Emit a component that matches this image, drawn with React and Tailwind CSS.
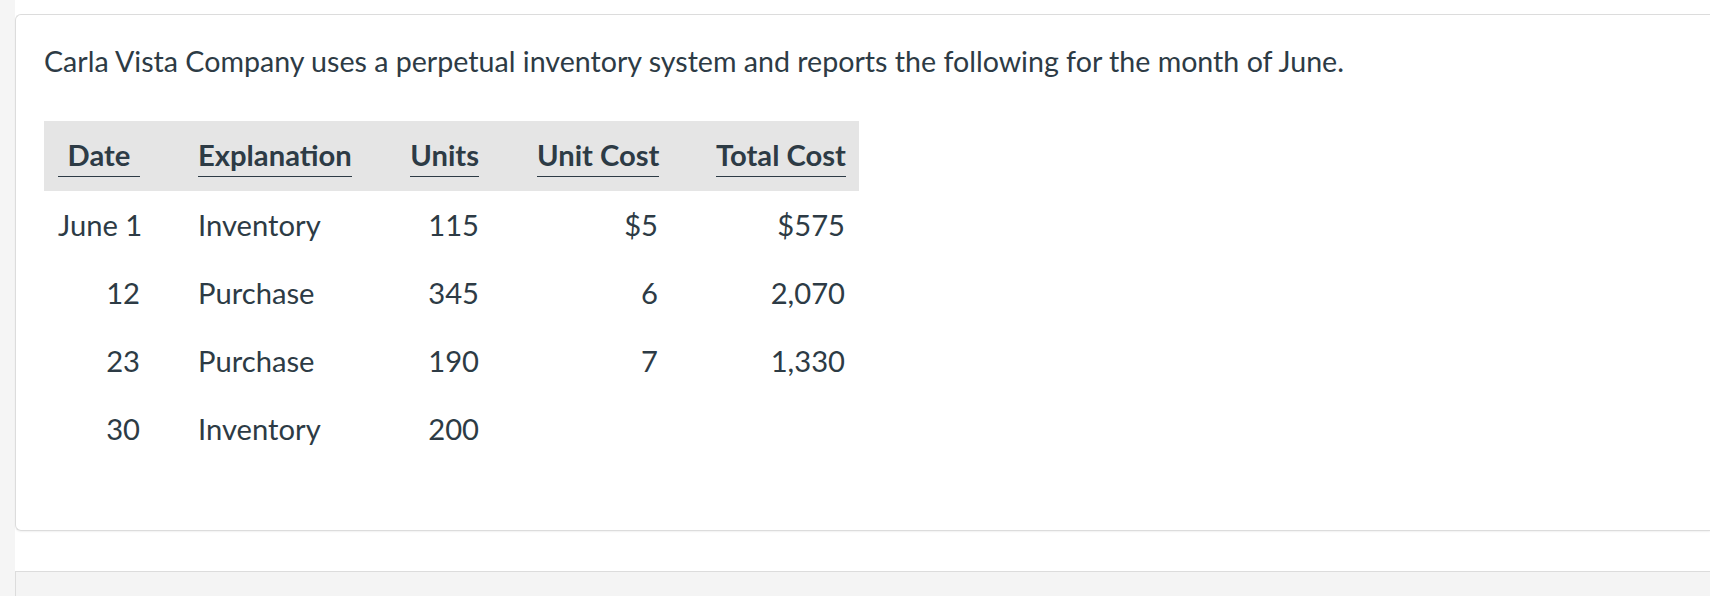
const rows = [
  { date: 'June 1', explanation: 'Inventory', units: '115', unitCost: '$5', totalCost: '$575' },
  { date: '12', explanation: 'Purchase', units: '345', unitCost: '6', totalCost: '2,070' },
  { date: '23', explanation: 'Purchase', units: '190', unitCost: '7', totalCost: '1,330' },
  { date: '30', explanation: 'Inventory', units: '200', unitCost: '', totalCost: '' },
];

function HeadCell({ children, className, full }) {
  return (
    <th className={'whitespace-nowrap pt-[12px] pb-[14px] text-center font-bold ' + className}>
      <span className={'border-b border-[#2d3b45] leading-[42px] ' + (full ? 'block w-full' : 'inline-block')}>
        {children}
      </span>
    </th>
  );
}

export default function App() {
  return (
    <div
      className="min-h-screen w-full overflow-hidden bg-[#f5f5f5] pl-[15px] text-[#2d3b45]"
      style={{ fontFamily: 'Lato, "Open Sans", Arial, sans-serif' }}
    >
      <div className="min-h-screen bg-white">
        <div className="pt-[14px]">
          {/* question card */}
          <div className="h-[517px] rounded-l-[6px] border border-r-0 border-[#dcdcdc] pl-[28px] pt-[25px] shadow-[0_1px_2px_rgba(0,0,0,0.06)]">
            <p className="text-[28.6px] leading-[42px]">
              Carla Vista Company uses a perpetual inventory system and reports the following for the month of June.
            </p>

            <table className="mt-[39px] w-[815px] table-fixed border-collapse whitespace-nowrap text-[29.2px]">
              <thead>
                <tr className="bg-[#e5e5e5]">
                  <HeadCell className="w-[125px] pl-[14px] pr-[29px]" full>Date</HeadCell>
                  <HeadCell className="w-[212px] px-[29px] text-left">Explanation</HeadCell>
                  <HeadCell className="w-[127px] px-[29px] text-right">Units</HeadCell>
                  <HeadCell className="w-[179px] px-[29px] text-right">Unit Cost</HeadCell>
                  <HeadCell className="w-[172px] pl-[29px] pr-[14px] text-right">Total Cost</HeadCell>
                </tr>
              </thead>
              <tbody>
                {rows.map((r, i) => (
                  <tr key={i} className="leading-[42px]">
                    <td className="pl-[14px] pr-[29px] pt-[13px] pb-[13px] text-right">{r.date}</td>
                    <td className="px-[29px] pt-[13px] pb-[13px] text-left">{r.explanation}</td>
                    <td className="px-[29px] pt-[13px] pb-[13px] text-right">{r.units}</td>
                    <td className="px-[29px] pt-[13px] pb-[13px] text-right">{r.unitCost}</td>
                    <td className="pl-[29px] pr-[14px] pt-[13px] pb-[13px] text-right">{r.totalCost}</td>
                  </tr>
                ))}
              </tbody>
            </table>
          </div>

          {/* next section */}
          <div className="mt-[40px] h-[60px] border-t border-l border-[#dcdcdc] bg-[#f4f4f4]"></div>
        </div>
      </div>
    </div>
  );
}
